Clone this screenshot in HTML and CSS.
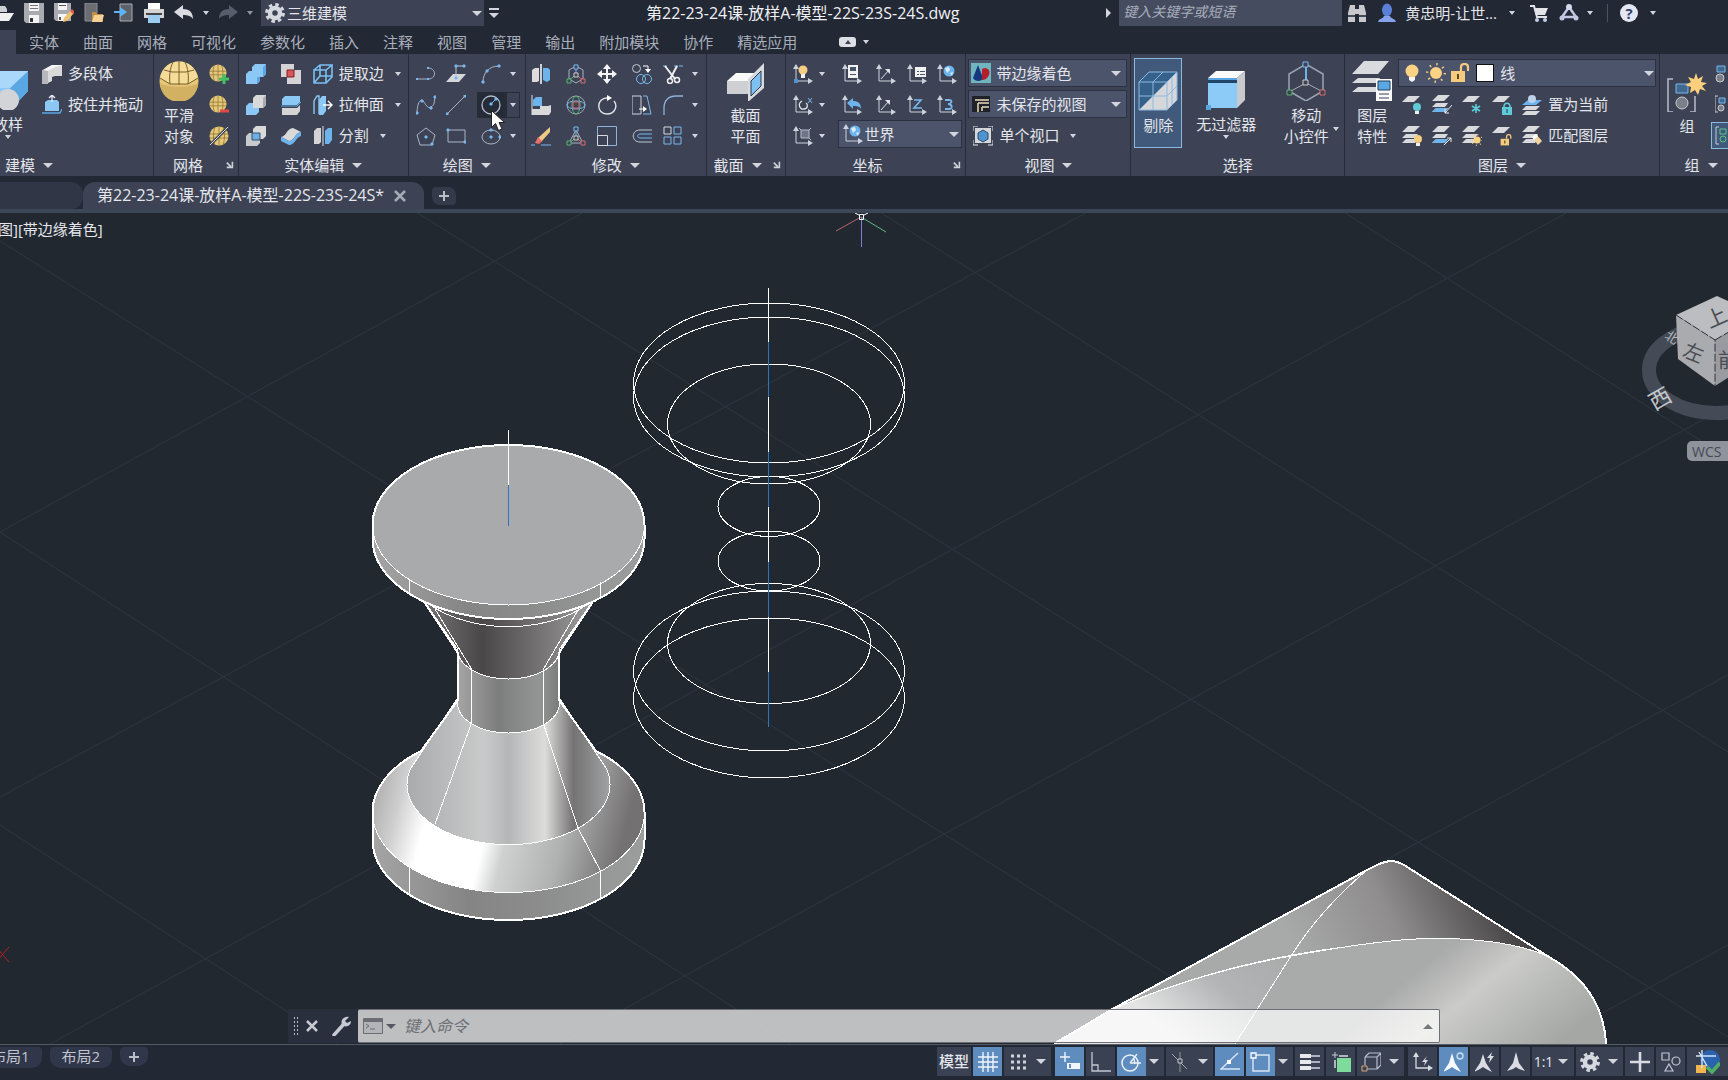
FILE: index.html
```html
<!DOCTYPE html>
<html lang="zh-CN">
  <head>
    <meta charset="utf-8" />
    <title>第22-23-24课-放样A-模型-22S-23S-24S.dwg</title>
    <link rel="stylesheet" href="styles.css">
  </head>

  <body>
    <!-- icon sprite -->
    <svg class="sprite" aria-hidden="true">
      <defs>
        <symbol id="open" viewBox="0 0 20 20"><path d="M0 3h11l2 3v3H6L2 18H0Z" fill="#cfd0d3" /><path d="M6 10h14l-5 8H1Z" fill="#f0f0f0" /></symbol>
        <symbol id="save" viewBox="0 0 20 20"><path d="M0 0h20v20H2l-2-2Z" fill="#a9abb0" /><path d="M5 0h10v8H5z" fill="#f4f4f4" /><path d="M6 2h8v1H6zM6 5h8v1H6z" fill="#777" /><path d="M5 12h10v8H5z" fill="#f4f4f4" /><path d="M6 15h3v4H6z" fill="#333" /></symbol>
        <symbol id="saveas" viewBox="0 0 20 20"><path d="M0 0h17v18H2l-2-2Z" fill="#a9abb0" /><path d="M4 0h9v7H4zM4 11h9v7H4z" fill="#f4f4f4" /><path d="M5 2h7v1H5zM5 14h2v3H5z" fill="#555" /><path d="M9 19l1-4 7-8 3 3-7 8Z" fill="#f0c26e" /><path d="M16 8l2-2 3 3-2 2Z" fill="#e0584f" /></symbol>
        <symbol id="fromweb" viewBox="0 0 20 20"><path d="M1 0h12v18H1z" fill="#6a6d72" stroke="#8b8e94" /><path d="M8 9h4l1 2h6v8H8z" fill="#c08f43" /><path d="M10 12h10l-2 7H8Z" fill="#f6d193" /></symbol>
        <symbol id="toweb" viewBox="0 0 20 20"><path d="M6 1h12v17H6z" fill="#5d6269" stroke="#a9adb3" /><path d="M0 8h6V4l7 5-7 5v-4H0Z" fill="#5cb3f5" /></symbol>
        <symbol id="print" viewBox="0 0 20 20"><path d="M4 0h12v6H4z" fill="#fff" /><path d="M0 6h20v9H0z" fill="#d4d4d4" /><path d="M2 10h16v2H2z" fill="#444" /><path d="M4 12h12v8H4z" fill="#9ccdf0" /></symbol>
        <symbol id="undo" viewBox="0 0 20 20"><path d="M0 9l9-7v4c7 0 10 4 10 10-2-3-5-4-10-4v4Z" fill="#d9dbe0" /></symbol>
        <symbol id="redo" viewBox="0 0 20 20"><path d="M20 9l-9-7v4C4 6 1 10 1 16c2-3 5-4 10-4v4Z" fill="#565d6b" /></symbol>
        <symbol id="gear" viewBox="0 0 20 20"><circle cx="10" cy="10" r="5" fill="none" stroke="#d6d9e0" stroke-width="4.500" /><circle cx="10" cy="10" r="8.400" fill="none" stroke="#d6d9e0" stroke-width="3" stroke-dasharray="3.500 3.100" /></symbol>
        <symbol id="find" viewBox="0 0 20 20"><path d="M3 2h5v4h4V2h5l2 8v9h-7v-8H8v8H1v-9Z" fill="#c9c9cd" /><path d="M1 12h7v2H1zM12 12h7v2h-7z" fill="#444b58" /></symbol>
        <symbol id="user" viewBox="0 0 20 20"><ellipse cx="10" cy="7" rx="5" ry="6.500" fill="#5a7fd6" /><path d="M1 19c1-4 5-3 6-6h6c1 3 5 2 6 6Z" fill="#86a2ec" /></symbol>
        <symbol id="cart" viewBox="0 0 20 20"><path d="M1 3h4l3 11h10" fill="none" stroke="#e2e3e8" stroke-width="2" /><path d="M5 5h14l-3 7H7Z" fill="#e2e3e8" /><circle cx="8" cy="17" r="2" fill="#c5cbea" /><circle cx="16" cy="17" r="2" fill="#c5cbea" /></symbol>
        <symbol id="adsk" viewBox="0 0 20 20"><path d="M10 4 3 14h14Z" fill="none" stroke="#c2c8e4" stroke-width="2.500" /><circle cx="10" cy="4" r="3" fill="#d4d8ec" /><circle cx="3" cy="15" r="2.500" fill="#c2c8e4" /><circle cx="17" cy="15" r="2.500" fill="#c2c8e4" /></symbol>

        <symbol id="loft" viewBox="0 0 40 40"><path d="M0 1h40v20L26 36 8 18H0Z" fill="#8cc8f5" /><path d="M40 1v20L26 36 22 18Z" fill="#5aa7e4" /><path d="M0 1h40L22 18H8Z" fill="#a9d8fa" /><circle cx="20" cy="30" r="11" fill="#d2d4d8" /></symbol>
        <symbol id="polysolid" viewBox="0 0 20 20"><path d="M1 6 10 1h10v11h-7l-3 1v4l-6 3H0Z" fill="#d9d9d9" /><path d="M0 6h6v14H0z" fill="#b5b7bb" /><path d="M1 6 10 1h10l-9 3-5 3Z" fill="#f5f5f5" /></symbol>
        <symbol id="presspull" viewBox="0 0 20 20"><path d="M3 7l3-2h9l2 2v9H3z" fill="#8cc8f5" /><path d="M10 7V0M7 3l3-3 3 3" fill="none" stroke="#eef" stroke-width="1.300" /><path d="M0 18h18l2-4" fill="none" stroke="#5aa7e4" stroke-width="1.400" /></symbol>
        <symbol id="smooth" viewBox="0 0 40 40"><circle cx="20" cy="20" r="19.500" fill="#e6c777" /><path d="M1 17C4 5 12 .5 20 .5S36 5 39 17l-10 6H11Z" fill="#f5dc98" /><path d="M1 17l10 6h18l10-6M11 23c-1-8 0-16 3-22M29 23c1-8 0-16-3-22M20 0v24M5 9l8 2h14l8-2" fill="none" stroke="#77612b" /><path d="M1 22c6 5 32 5 38 0a19 19 0 0 1-38 0" fill="#d3b162" /></symbol>
        <symbol id="ball" viewBox="0 0 20 20"><circle cx="10" cy="10" r="9.500" fill="#e6c777" /><path d="M1 8h18M1 12h18M6 1c-2 6-2 12 0 18M14 1c2 6 2 12 0 18M10 1v18" fill="none" stroke="#8a7338" stroke-width=".8" /></symbol>
        <symbol id="ballplus" viewBox="0 0 20 20"><use href="#ball" width="18" height="18" /><path d="M15 10v10M10 15h10" stroke="#45c062" stroke-width="3" /></symbol>
        <symbol id="ballminus" viewBox="0 0 20 20"><use href="#ball" width="18" height="18" /><path d="M11 16h9" stroke="#e0484a" stroke-width="3" /></symbol>
        <symbol id="ballcut" viewBox="0 0 20 20"><use href="#ball" width="20" height="20" /><path d="M19 1 1 19" stroke="#3d4354" stroke-width="3" /><path d="M19 1 1 19" stroke="#ddd" /></symbol>

        <symbol id="union" viewBox="0 0 20 20"><path d="M6 3l3-3h11v10l-3 3h-3v4l-3 3H0V10l3-3h3Z" fill="#8cc8f5" /><path d="M20 0v10l-3 3V3ZM14 13v4l-3 3v-7Z" fill="#5aa7e4" /></symbol>
        <symbol id="interfere" viewBox="0 0 20 20"><path d="M0 0h13v13H0zM6 6h14v14H6z" fill="#d4d4d6" /><path d="M6 6h7v7H6z" fill="#d9595b" stroke="#7c2022" /></symbol>
        <symbol id="subtract" viewBox="0 0 20 20"><path d="M0 11l3-3h4v5h6v4l-3 3H0Z" fill="#8cc8f5" /><path d="M7 3l3-3h10v10l-3 3H7Z" fill="#d9d9d9" /><path d="M20 0v10l-3 3V3Z" fill="#a9abb0" /></symbol>
        <symbol id="slice" viewBox="0 0 20 20"><path d="M1 4l3-3h15v6l-3 3H1Z" fill="#8cc8f5" /><path d="M1 13h15l3-3v6l-3 4H1Z" fill="#d4d4d4" /><path d="M0 11h16l4-4" fill="none" stroke="#5aa7e4" /></symbol>
        <symbol id="intersect" viewBox="0 0 20 20"><path d="M0 10l3-3h11v10l-3 3H0Z" fill="#c9cace" /><path d="M7 3l3-3h10v10l-3 3H7Z" fill="#d9d9d9" /><path d="M6 7h8v7H6z" fill="#6eaee0" stroke="#2f5173" /></symbol>
        <symbol id="thicken" viewBox="0 0 20 20"><path d="M0 11c5 0 6-9 12-9l8 4c-6 1-7 9-12 9Z" fill="#d9d9d9" /><path d="M0 11l8 4c5 0 6-8 12-9v4c-5 1-6 9-12 9l-8-4Z" fill="#6db4ec" /></symbol>
        <symbol id="edges" viewBox="0 0 20 20"><path d="M1 6h12v13H1zM1 6l6-5h12l-6 5M19 1v12l-6 6M7 1v11h12M7 12l-6 7" fill="none" stroke="#79c0f2" stroke-width="1.600" /></symbol>
        <symbol id="extrude" viewBox="0 0 20 20"><path d="M1 19V6l3-5h2v18" fill="none" stroke="#8cc8f5" stroke-width="1.400" /><path d="M6 5l3-4h4v15l-3 4H6Z" fill="#8cc8f5" /><path d="M10 10h8M15 6l4 4-4 4" fill="none" stroke="#fff" stroke-width="1.400" /></symbol>
        <symbol id="separate" viewBox="0 0 20 20"><path d="M1 5l3-3h4v14l-2 2H1Z" fill="#d4d4d4" /><path d="M12 5l3-3h4v12l-3 4h-4Z" fill="#6db4ec" /><path d="M10 0v20" stroke="#dfe6ee" /></symbol>

        <symbol id="pline" viewBox="0 0 20 20"><path d="M1 15h12c8-1 7-11-1-11" fill="none" stroke="#aab6c6" /><path d="M0 14h2v2H0zM11 14h2v2h-2zM11 3h2v2h-2z" fill="#79b8ee" /></symbol>
        <symbol id="plane" viewBox="0 0 20 20"><path d="M7 10h13l-7 8H0Z" fill="#d4d6da" /><path d="M10 14V2h9" fill="none" stroke="#b9c7d6" /><path d="M9 1h2v2H9zM17 1h2v2h-2zM9 13h2v2H9z" fill="#79b8ee" stroke="#79b8ee" /></symbol>
        <symbol id="arc" viewBox="0 0 20 20"><path d="M2 18C2 9 8 2 18 2" fill="none" stroke="#aab6c6" /><path d="M1 17h2v2H1zM5 6h2v2H5zM17 1h2v2h-2z" fill="#79b8ee" stroke="#79b8ee" /></symbol>
        <symbol id="spline" viewBox="0 0 20 20"><path d="M1 19C1 9 4 3 7 6s4 8 8 6 3-5 4-11" fill="none" stroke="#aab6c6" /><path d="M0 17h2v2H0zM5 5h2v2H5zM14 12h2v2h-2zM18 1h2v2h-2z" fill="#79b8ee" stroke="#79b8ee" /></symbol>
        <symbol id="line" viewBox="0 0 20 20"><path d="M1 19 19 1" stroke="#aab6c6" /><path d="M0 18h2v2H0zM18 0h2v2h-2z" fill="#79b8ee" stroke="#79b8ee" /></symbol>
        <symbol id="circle" viewBox="0 0 20 20"><circle cx="10" cy="10" r="9" fill="none" stroke="#b4bfcc" stroke-width="1.300" /><path d="M10 9l5-5" stroke="#79b8ee" /><path d="M9 8h2v2H9zM14 3h2v2h-2z" fill="#79b8ee" stroke="#79b8ee" /></symbol>
        <symbol id="polygon" viewBox="0 0 20 20"><path d="M10 2l9 7-3 10H4L1 9Z" fill="none" stroke="#aab6c6" /><path d="M9 10h2v2H9zM15 17h2v2h-2z" fill="#79b8ee" stroke="#79b8ee" /></symbol>
        <symbol id="rect" viewBox="0 0 20 20"><path d="M2 4h17v12H2z" fill="none" stroke="#aab6c6" /><path d="M1 3h2v2H1zM18 15h2v2h-2z" fill="#79b8ee" stroke="#79b8ee" /></symbol>
        <symbol id="ellipse" viewBox="0 0 20 20"><ellipse cx="10" cy="11" rx="9" ry="7" fill="none" stroke="#aab6c6" /><path d="M9 10h2v2H9zM9 3h2v2H9zM18 10h2v2h-2z" fill="#79b8ee" stroke="#79b8ee" /></symbol>

        <symbol id="mirror3d" viewBox="0 0 20 20"><path d="M1 6l3-2h4v13l-2 1H1Z" fill="#dcdcde" /><path d="M12 4h5l2 2v10l-3 2-4-2Z" fill="#6db4ec" /><path d="M10 0v20" stroke="#fff" stroke-width="1.500" /></symbol>
        <symbol id="move3d" viewBox="0 0 20 20"><path d="M3 15V6l7-4 7 4v9l-7 4Z" fill="none" stroke="#a4b4c4" /><path d="M10 9V3" stroke="#79b8ee" /><path d="M10 11 3 16" stroke="#58b56f" /><path d="M10 11l7 5" stroke="#d66a70" /><path d="M8 1h4v4H8z" fill="#3d4354" stroke="#79b8ee" /><path d="M1 15h4v4H1z" fill="#3d4354" stroke="#58b56f" /><path d="M15 15h4v4h-4z" fill="#3d4354" stroke="#d66a70" /><path d="M8 9h4v4H8z" fill="#3d4354" stroke="#ccc" /></symbol>
        <symbol id="move" viewBox="0 0 20 20"><path d="M10 0l4 5h-3v4h4V6l5 4-5 4v-3h-4v4h3l-4 5-4-5h3v-4H5v3l-5-4 5-4v3h4V5H6Z" fill="#f4f4f4" /></symbol>
        <symbol id="copy" viewBox="0 0 20 20"><circle cx="4.500" cy="4.500" r="4" fill="none" stroke="#c3c9d2" /><circle cx="9" cy="15" r="4.500" fill="none" stroke="#79b8ee" /><circle cx="15" cy="15" r="4.500" fill="none" stroke="#79b8ee" /><path d="M11 2h5v4" fill="none" stroke="#fff" /><path d="M13 5h6l-3 4Z" fill="#fff" /></symbol>
        <symbol id="trim" viewBox="0 0 20 20"><path d="M0 2h5M11 2h9" stroke="#79b8ee" stroke-dasharray="4 1" /><path d="M2 2l10 13M14 2 7 15" stroke="#f0f0f0" stroke-width="2" /><circle cx="7" cy="17" r="2.500" fill="none" stroke="#f0f0f0" stroke-width="1.500" /><circle cx="14" cy="16" r="2.500" fill="none" stroke="#f0f0f0" stroke-width="1.500" /></symbol>
        <symbol id="align3d" viewBox="0 0 20 20"><path d="M2 5l3-3h6v9H2z" fill="#6db4ec" /><path d="M1 0v20" stroke="#dfe6ee" /><path d="M1 14h8v-3h8l3-1v7l-2 3H1z" fill="#d9d9db" /></symbol>
        <symbol id="rotate3d" viewBox="0 0 20 20"><circle cx="10" cy="10" r="9" fill="none" stroke="#9aa8b8" /><ellipse cx="10" cy="10" rx="4" ry="9" fill="none" stroke="#58b56f" /><ellipse cx="10" cy="10" rx="9" ry="4" fill="none" stroke="#79b8ee" /><path d="M7 7h6v6H7z" fill="none" stroke="#d66a70" /></symbol>
        <symbol id="rotate" viewBox="0 0 20 20"><path d="M10 3C-1 3-1 19 10 19c8 0 11-8 7-13" fill="none" stroke="#dfe2e8" stroke-width="1.400" /><path d="M10 0l5 3-5 3Z" fill="#fff" /></symbol>
        <symbol id="stretch" viewBox="0 0 20 20"><path d="M0 1h9v18H0z" fill="none" stroke="#cfd3da" /><path d="M11 1h4l4 18h-8" fill="none" stroke="#79b8ee" /><path d="M7 14h5" stroke="#fff" /><path d="M11 11l4 3-4 3Z" fill="#fff" /></symbol>
        <symbol id="fillet" viewBox="0 0 20 20"><path d="M1 20V13C1 5 6 1 13 1h7" fill="none" stroke="#8cb3d8" stroke-width="1.300" /></symbol>
        <symbol id="erase" viewBox="0 0 20 20"><path d="M7 12 19 1v5l-9 10Z" fill="#f0c988" /><path d="M7 11l4 4-3 3-4-1Z" fill="#e66f6c" /><path d="M0 19h4M10 19h10" stroke="#79b8ee" /></symbol>
        <symbol id="scale3d" viewBox="0 0 20 20"><path d="M10 4 3 17h14Z" fill="none" stroke="#a4b4c4" /><path d="M10 3v8" stroke="#79b8ee" /><path d="M10 12l-7 5" stroke="#58b56f" /><path d="M10 12l7 5" stroke="#d66a70" /><path d="M8 1h4v4H8z" fill="#3d4354" stroke="#79b8ee" /><path d="M1 15h4v4H1z" fill="#3d4354" stroke="#58b56f" /><path d="M15 15h4v4h-4z" fill="#3d4354" stroke="#d66a70" /><path d="M8 10h4v4H8z" fill="#3d4354" stroke="#ccc" /></symbol>
        <symbol id="scale" viewBox="0 0 20 20"><path d="M.5 19.500V.5h19v19Z" fill="none" stroke="#8cb3d8" /><path d="M.5 9.500h10v10H.5z" fill="none" stroke="#d6dae0" /></symbol>
        <symbol id="offset" viewBox="0 0 20 20"><path d="M20 4H8c-9 0-9 12 0 12h12" fill="none" stroke="#b9c7d6" /><path d="M20 8H8c-3 0-3 4 0 4h12" fill="none" stroke="#79b8ee" /></symbol>
        <symbol id="array" viewBox="0 0 20 20"><path d="M1 1h7v7H1z" fill="none" stroke="#d6dae0" /><path d="M11 1h7v7h-7zM1 11h7v7H1zM11 11h7v7h-7z" fill="none" stroke="#79b8ee" /></symbol>

        <symbol id="section" viewBox="0 0 40 40"><path d="M1 20l9-8h19L22 20Z" fill="#fafafa" /><path d="M1 20h22v13H1z" fill="#cfd0d3" /><path d="M22 18 38 2v25L22 41Z" fill="#d9dade" /><path d="M25 20 35 10v15L25 35Z" fill="#7fc0f3" stroke="#2d3a4c" /></symbol>

        <symbol id="axes" viewBox="0 0 20 20"><path d="M3 3v14h13" fill="none" stroke="#cdd3dc" /><path d="M0 5l3-5 3 5ZM15 14l5 3-5 3Z" fill="#cdd3dc" /></symbol>
        <symbol id="axbulb" viewBox="0 0 20 20"><use href="#axes" /><circle cx="10" cy="6" r="4.500" fill="#f4cf83" /><path d="M8 10h4v4H8z" fill="#f2f2f2" /><path d="M1 15h4v4H1z" fill="#4f93cf" /></symbol>
        <symbol id="axmanage" viewBox="0 0 20 20"><use href="#axes" /><path d="M6 1h10v13H6z" fill="#f2f2f2" /><path d="M8 3h6v4H8zM8 10h6v1H8z" fill="#44546b" /></symbol>
        <symbol id="axobj" viewBox="0 0 20 20"><use href="#axes" /><path d="M5 15 13 6" stroke="#dfe2e8" /><path d="M14 5v5l-5-5Z" fill="#dfe2e8" /></symbol>
        <symbol id="axlist" viewBox="0 0 20 20"><use href="#axes" /><path d="M8 3h11v10H8z" fill="#f2f2f2" /><path d="M10 7h2v1h-2zM13 7h5v1h-5zM10 10h2v1h-2zM13 10h5v1h-5z" fill="#44546b" /></symbol>
        <symbol id="axworld" viewBox="0 0 20 20"><use href="#axes" /><circle cx="12" cy="7" r="5.500" fill="#6db4ec" /><path d="M8 4l4-1 1 3-3 3ZM13 9l3-1-1 4Z" fill="#d6ecfb" /></symbol>
        <symbol id="axrot" viewBox="0 0 20 20"><use href="#axes" /><path d="M9 6c-5 3-2 9 2 8 4 0 4-5 2-6" fill="none" stroke="#dfe2e8" stroke-width="1.300" /><path d="M15 3l4 5M19 3l-4 5" stroke="#79b8ee" /></symbol>
        <symbol id="axprev" viewBox="0 0 20 20"><use href="#axes" /><path d="M5 8l6-5v3c5 0 8 2 8 8-2-3-4-3-8-3v3Z" fill="#6db4ec" /></symbol>
        <symbol id="axz" viewBox="0 0 20 20"><use href="#axes" /><path d="M7 5h7L7 13h8" fill="none" stroke="#79b8ee" stroke-width="1.600" /></symbol>
        <symbol id="ax3" viewBox="0 0 20 20"><use href="#axes" /><path d="M8 5h5c3 1 1 4-2 4 4 0 5 4 2 5H8" fill="none" stroke="#79b8ee" stroke-width="1.800" /></symbol>
        <symbol id="axface" viewBox="0 0 20 20"><use href="#axes" /><path d="M8 4h8v8H8z" fill="#6d7686" stroke="#b7bdc8" /><path d="M6 2l2 2M18 2l-2 2M18 14l-2-2" stroke="#b7bdc8" /></symbol>

        <symbol id="shade" viewBox="0 0 20 20"><path d="M0 0h20v20H0z" fill="#6fb6bf" /><path d="M7 2 2 15c2 4 9 4 10 0Z" fill="#17377f" /><path d="M11 6c5-3 9 2 7 6-1 3-4 5-7 5Z" fill="#b3202c" /></symbol>
        <symbol id="viewico" viewBox="0 0 20 20"><path d="M1 2h18v16H1z" fill="#1f2228" /><path d="M4 6h14M7 9h11M7 9v9M11 13h7M11 13v4" stroke="#e8dcb8" stroke-width="1.500" /></symbol>
        <symbol id="vport" viewBox="0 0 20 20"><path d="M2 2h16v15H2z" fill="#d6d7da" /><path d="M0 5V0h5M15 0h5v5M20 14v5h-5M5 19H0v-5" fill="none" stroke="#e8e8e8" /><path d="M10 4l5 3v6l-5 3-5-3V7Z" fill="#4f93cf" stroke="#264b70" /></symbol>

        <symbol id="cull" viewBox="0 0 40 40"><path d="M1 39V11L11 1h28v28L29 39Z" fill="#35618a" /><path d="M1 39 39 1v28L29 39Z" fill="#d6d7da" /><path d="M1 39V11L11 1h28v28L29 39ZM1 11h28l10-10M29 11v28M1 25h28l10-10M15 11v28M15 11 25 1M34 6v28" fill="none" stroke="#8cb9e0" /></symbol>
        <symbol id="nofilter" viewBox="0 0 40 40"><path d="M2 8 10 1h29l-8 7Z" fill="#fafafa" /><path d="M31 8l8-7v29l-8 8Z" fill="#c9cacd" /><path d="M2 8h29v30H2z" fill="#8ccaf8" /><path d="M2 8h29v5H2z" fill="#20476a" /><path d="M2 8h29v2H2zM0 35h5v5H0z" fill="#58a5df" /></symbol>
        <symbol id="gizmo" viewBox="0 0 40 40"><path d="M3 30V13L20 3l17 10v17L20 40Z" fill="none" stroke="#9aa5b3" stroke-width="1.500" /><path d="M20 20V5" stroke="#6db4ec" stroke-width="2" /><path d="M20 22 3 31M20 22l17 9" stroke="#a9abb0" /><path d="M17 1h5v5h-5z" fill="#3d4354" stroke="#79b8ee" /><path d="M1 29h5v5H1z" fill="#3d4354" stroke="#58b56f" /><path d="M34 29h5v5h-5z" fill="#3d4354" stroke="#d66a70" /><path d="M17 19h5v5h-5z" fill="#3d4354" stroke="#ccc" /></symbol>

        <symbol id="layerprop" viewBox="0 0 40 40"><path d="M12 0h25L26 13H0ZM6 17h22l-3 5H0ZM6 26h19v5H0Z" fill="#d9dadd" /><path d="M24 18h16v22H24z" fill="#fafafa" /><path d="M26 20h12v9H26z" fill="#5aa7e4" stroke="#23405e" /><path d="M27 33h10M27 37h10" stroke="#3a4150" /></symbol>
        <symbol id="bulb" viewBox="0 0 20 20"><circle cx="10" cy="8" r="6.500" fill="#f9d283" /><path d="M7 14h6v3l-3 2-3-2Z" fill="#f5f5f5" /></symbol>
        <symbol id="sun" viewBox="0 0 20 20"><circle cx="10" cy="10" r="6" fill="#f9d283" /><circle cx="10" cy="10" r="8.800" fill="none" stroke="#f9d283" stroke-width="2.400" stroke-dasharray="1.400 5.510" /></symbol>
        <symbol id="unlock" viewBox="0 0 20 20"><path d="M1 8h14v11H1z" fill="#f6cb7d" /><path d="M11 8V4c0-4 7-4 7 0v4" fill="none" stroke="#f6cb7d" stroke-width="2.200" /><path d="M8 11v5" stroke="#5c4a22" stroke-width="2" /></symbol>
        <symbol id="sheet" viewBox="0 0 20 20"><path d="M6 1h12l-6 6H0Z" fill="#d9dadd" /></symbol>
        <symbol id="stack" viewBox="0 0 20 20"><path d="M6 0h12l-6 6H0ZM4 8h12l-3 4H0ZM4 13h12l-3 4H0Z" fill="#d9dadd" /></symbol>
        <symbol id="layoff" viewBox="0 0 20 20"><use href="#sheet" /><circle cx="15" cy="12" r="4" fill="#5ecbd6" /><path d="M13 16h4v3h-4z" fill="#eee" /></symbol>
        <symbol id="layiso" viewBox="0 0 20 20"><use href="#stack" /><path d="M4 13h12l-3 4H0Z" fill="#6db4ec" /><path d="M20 10l-7 8M13 14v4h4" fill="none" stroke="#eee" /></symbol>
        <symbol id="layfrz" viewBox="0 0 20 20"><use href="#sheet" /><path d="M14 9v9M10 11l8 5M18 11l-8 5" stroke="#5ecbd6" stroke-width="1.600" /></symbol>
        <symbol id="laylck" viewBox="0 0 20 20"><use href="#sheet" /><path d="M10 12h10v8H10z" fill="#5ecbd6" /><path d="M12 12c0-5 6-5 6 0" fill="none" stroke="#5ecbd6" stroke-width="1.600" /><path d="M15 14v4" stroke="#235" /></symbol>
        <symbol id="laycur" viewBox="0 0 20 20"><path d="M6 5h14l-6 5H0Z" fill="#6db4ec" /><path d="M4 11h14l-4 4H0ZM4 16h14l-4 4H0Z" fill="#d9dadd" /><circle cx="10" cy="4" r="4" fill="#bcd3ea" /></symbol>
        <symbol id="layon" viewBox="0 0 20 20"><use href="#stack" /><circle cx="16" cy="13" r="4" fill="#f6cb7d" /><path d="M14 17h4v3h-4z" fill="#eee" /></symbol>
        <symbol id="layuniso" viewBox="0 0 20 20"><use href="#stack" /><path d="M4 13h12l-3 4H0Z" fill="#6db4ec" /><path d="M12 19l7-7M15 12h4v4" fill="none" stroke="#eee" /></symbol>
        <symbol id="laythw" viewBox="0 0 20 20"><use href="#stack" /><use href="#sun" x="9" y="8" width="12" height="12" /></symbol>
        <symbol id="layulk" viewBox="0 0 20 20"><use href="#sheet" /><use href="#unlock" x="8" y="8" width="12" height="12" /></symbol>
        <symbol id="laymch" viewBox="0 0 20 20"><use href="#stack" /><path d="M10 11l4-3 6 7-4 4Z" fill="#f0d4a4" /><path d="M10 11l4-3 2 2-4 4Z" fill="#fff" /></symbol>
        <symbol id="group" viewBox="0 0 40 40"><path d="M6 7H1v33h5M23 40h5V24" fill="none" stroke="#b7bdc8" stroke-width="1.500" /><path d="M9 12h12v9H9z" fill="#41698f" stroke="#79b8ee" /><circle cx="15" cy="31" r="6" fill="#7a7f89" stroke="#c9cbd0" /><path d="M29 1l2 6 5-3-2 6 6 1-5 3 4 5-6-2-2 6-3-5-5 3 1-6-6-2 6-3-3-5 6 2Z" fill="#fbcf7c" /></symbol>
        <symbol id="grp1" viewBox="0 0 20 20"><path d="M2 2h8v6H2z" fill="#41698f" stroke="#79b8ee" /><circle cx="5" cy="14" r="4" fill="#7a7f89" stroke="#c9cbd0" /></symbol>
        <symbol id="grp2" viewBox="0 0 20 20"><path d="M3 1H0v16h3" fill="none" stroke="#c9cbd0" /><path d="M4 3h6v5H4z" fill="#41698f" stroke="#79b8ee" /><circle cx="6" cy="13" r="3" fill="#7a7f89" stroke="#c9cbd0" /></symbol>
        <symbol id="grp3" viewBox="0 0 20 20"><path d="M4 1H1v17h3" fill="none" stroke="#c9cbd0" /><path d="M5 3h6v5H5z" fill="none" stroke="#58c883" /><circle cx="8" cy="13" r="3" fill="none" stroke="#58c883" /></symbol>

        <symbol id="launch" viewBox="0 0 20 20"><path d="M6 7l5 5M13 6v7H6" fill="none" stroke="#cdd1da" stroke-width="2" /></symbol>
        <symbol id="wrench" viewBox="0 0 20 20"><path d="M2 19 11 9" stroke="#c7cad2" stroke-width="3.500" stroke-linecap="round" /><path d="M17 1c-5-1-9 3-7 8 4 3 9 1 9-4l-4 2-2-2Z" fill="#c7cad2" /></symbol>

        <symbol id="s-grid" viewBox="0 0 20 20"><path d="M5 0v20M10 0v20M15 0v20M0 5h20M0 10h20M0 15h20" stroke="#f2f6fb" stroke-width="1.400" /></symbol>
        <symbol id="s-snap" viewBox="0 0 20 20"><path d="M3 4h15M3 10h15M3 16h15" stroke="#cfd3db" stroke-width="3" stroke-dasharray="3 3" /></symbol>
        <symbol id="s-dyn" viewBox="0 0 20 20"><path d="M5 0v10M0 5h10" stroke="#f2f6fb" stroke-width="1.400" /><path d="M7 11h13v6H7z" fill="#f2f6fb" /><path d="M9 12h2v4H9z" fill="#5f8cbf" /></symbol>
        <symbol id="s-ortho" viewBox="0 0 20 20"><path d="M1 0v19h19M1 13h6v6" fill="none" stroke="#c2c7d1" stroke-width="1.300" /></symbol>
        <symbol id="s-polar" viewBox="0 0 20 20"><circle cx="9" cy="11" r="8" fill="none" stroke="#eaf1f9" stroke-width="1.500" /><path d="M9 11 16 2M9 11h11M13 7l1 5" stroke="#eaf1f9" stroke-width="1.300" /></symbol>
        <symbol id="s-iso" viewBox="0 0 20 20"><path d="M10 0v20" stroke="#8d9687" /><path d="M2 2l15 15" stroke="#9aa0ab" /><path d="M8 7h4v4H8z" fill="#3b4253" stroke="#c2c7d1" /></symbol>
        <symbol id="s-track" viewBox="0 0 20 20"><path d="M18 1 1 17h19" fill="none" stroke="#d9e6f4" stroke-width="1.400" /><path d="M7 8h4v4H7z" fill="#fff" /></symbol>
        <symbol id="s-osnap" viewBox="0 0 20 20"><path d="M3 3h16v16H3z" fill="none" stroke="#d9e6f4" stroke-width="1.400" /><path d="M1 1h5v5H1z" fill="#5f8cbf" stroke="#fff" stroke-width="1.300" /></symbol>
        <symbol id="s-lw" viewBox="0 0 20 20"><path d="M0 4h11M0 10h11M0 16h11" stroke="#e6e8ee" stroke-width="4" /><path d="M11 4h9M11 10h9M11 16h9" stroke="#aeb3bf" stroke-width="2" /></symbol>
        <symbol id="s-trans" viewBox="0 0 20 20"><path d="M4 0v6M1 3h6" stroke="#c2c7d1" /><path d="M4 8v8M8 4h9" stroke="#d7dbe2" stroke-width="1.500" /><path d="M6 6h14v14H6z" fill="#7edb9b" /></symbol>
        <symbol id="s-3d" viewBox="0 0 20 20"><path d="M4 5h12v12H6M4 5l4-4h12v12l-4 4M16 5l4-4M4 5v8" fill="none" stroke="#b9bfca" stroke-width="1.200" /><path d="M1 14h5v5H1z" fill="#3b4253" stroke="#d9a77a" /></symbol>
        <symbol id="s-ucs" viewBox="0 0 20 20"><path d="M3 3v13h14" fill="none" stroke="#d6dae2" stroke-width="1.300" /><path d="M0 5l3-5 3 5ZM15 13l5 3-5 3ZM14 4l-5 6h3l-1 4 4-6h-3Z" fill="#d6dae2" /></symbol>
        <symbol id="s-anno" viewBox="0 0 20 20"><path d="M10 0l3 11 6 8-6-2-3-2-3 2-6 2 6-8Z" fill="#d9dce3" /></symbol>
        <symbol id="s-anno1" viewBox="0 0 20 20"><path d="M8 1l3 10 6 9-6-3-3-2-3 2-6 3 6-9Z" fill="#f6f9fc" /><circle cx="16" cy="4" r="3" fill="none" stroke="#cfe1f3" stroke-width="1.300" /></symbol>
        <symbol id="s-anno2" viewBox="0 0 20 20"><path d="M8 2l3 9 6 9-6-3-3-2-3 2-6 3 6-9Z" fill="#d9dce3" /><path d="M17 0l-5 6h3l-1 5 5-7h-3Z" fill="#d9dce3" /></symbol>
        <symbol id="s-plus" viewBox="0 0 20 20"><path d="M10 0v20M0 10h20" stroke="#d9dce3" stroke-width="2.600" /></symbol>
        <symbol id="s-iso2" viewBox="0 0 20 20"><path d="M1 1h7v7H1zM8 12l4 7H4Z" fill="none" stroke="#c2c7d1" stroke-width="1.200" /><circle cx="15" cy="9" r="4" fill="none" stroke="#c2c7d1" stroke-width="1.200" /></symbol>
        <symbol id="s-perf" viewBox="0 0 24 24"><circle cx="14" cy="10" r="10" fill="#2a62ad" /><path d="M0 15h10v8H0z" fill="#f2b54d" /><path d="M6 0v18M0 6h20M11 16l-8-14" stroke="#d3e4f6" stroke-width="1.400" /><path d="M11 17l5 5 8-9" fill="none" stroke="#4fae63" stroke-width="3.500" /></symbol>
      </defs>
    </svg>

    <header class="titlebar">
      <div class="quick">
        <button aria-label="打开"><svg><use href="#open" /></svg></button>
        <button aria-label="保存"><svg><use href="#save" /></svg></button>
        <button aria-label="另存为"><svg><use href="#saveas" /></svg></button>
        <button aria-label="从 Web 打开"><svg><use href="#fromweb" /></svg></button>
        <button aria-label="保存到 Web"><svg><use href="#toweb" /></svg></button>
        <button aria-label="打印"><svg><use href="#print" /></svg></button>
        <button aria-label="放弃"><svg><use href="#undo" /></svg></button>
        <button class="slim" aria-label="放弃列表"><i class="caret"></i></button>
        <button aria-label="重做"><svg><use href="#redo" /></svg></button>
        <button class="slim" aria-label="重做列表"><i class="caret dim"></i></button>
      </div>
      <div class="combo workspace">
        <svg><use href="#gear" /></svg>
        <select aria-label="工作空间"><option>三维建模</option></select>
        <i class="caret big"></i>
      </div>
      <button class="customize" aria-label="自定义快速访问工具栏"><i class="caret big"></i></button>
      <h1>第22-23-24课-放样A-模型-22S-23S-24S.dwg</h1>
      <button class="slim" aria-label="收拢"><i class="caret right"></i></button>
      <input class="search" type="text" placeholder="键入关键字或短语" aria-label="搜索" />
      <div class="account">
        <button aria-label="查找"><svg><use href="#find" /></svg></button>
        <button class="name"><svg><use href="#user" /></svg>黄忠明-让世...<i class="caret"></i></button>
        <button aria-label="商店"><svg><use href="#cart" /></svg></button>
        <button class="app" aria-label="应用"><svg><use href="#adsk" /></svg><i class="caret"></i></button>
        <button class="help" aria-label="帮助"><b>?</b><i class="caret"></i></button>
      </div>
    </header>

    <nav class="tabs">
      <a class="current" href="#" aria-label="常用"></a>
      <a href="#">实体</a>
      <a href="#">曲面</a>
      <a href="#">网格</a>
      <a href="#">可视化</a>
      <a href="#">参数化</a>
      <a href="#">插入</a>
      <a href="#">注释</a>
      <a href="#">视图</a>
      <a href="#">管理</a>
      <a href="#">输出</a>
      <a href="#">附加模块</a>
      <a href="#">协作</a>
      <a href="#">精选应用</a>
      <button class="collapse" aria-label="最小化功能区"><span><i class="caret up"></i></span><i class="caret"></i></button>
    </nav>

    <div class="ribbon">
      <section class="panel modeling">
        <div class="body">
          <button class="large"><svg><use href="#loft" /></svg>放样<i class="caret"></i></button>
          <div class="list">
            <button><svg><use href="#polysolid" /></svg>多段体</button>
            <button><svg><use href="#presspull" /></svg>按住并拖动</button>
          </div>
        </div>
        <h2><span>建模<i class="caret big"></i></span></h2>
      </section>

      <section class="panel mesh">
        <div class="body">
          <button class="large"><svg><use href="#smooth" /></svg>平滑<br />对象</button>
          <div class="list">
            <button aria-label="提高平滑度"><svg><use href="#ballplus" /></svg></button>
            <button aria-label="降低平滑度"><svg><use href="#ballminus" /></svg></button>
            <button aria-label="优化网格"><svg><use href="#ballcut" /></svg></button>
          </div>
        </div>
        <h2><span>网格</span><button aria-label="网格设置"><svg><use href="#launch" /></svg></button></h2>
      </section>

      <section class="panel solidedit">
        <div class="body cells">
          <button aria-label="并集"><svg><use href="#union" /></svg></button>
          <button aria-label="干涉"><svg><use href="#interfere" /></svg></button>
          <button><svg><use href="#edges" /></svg>提取边<i class="caret"></i></button>
          <button aria-label="差集"><svg><use href="#subtract" /></svg></button>
          <button aria-label="剖切"><svg><use href="#slice" /></svg></button>
          <button><svg><use href="#extrude" /></svg>拉伸面<i class="caret"></i></button>
          <button aria-label="交集"><svg><use href="#intersect" /></svg></button>
          <button aria-label="加厚"><svg><use href="#thicken" /></svg></button>
          <button><svg><use href="#separate" /></svg>分割<i class="caret"></i></button>
        </div>
        <h2><span>实体编辑<i class="caret big"></i></span></h2>
      </section>

      <section class="panel draw">
        <div class="body cells">
          <button aria-label="多段线"><svg><use href="#pline" /></svg></button>
          <button aria-label="平面曲面"><svg><use href="#plane" /></svg></button>
          <div class="split"><button aria-label="圆弧"><svg><use href="#arc" /></svg></button><button aria-label="圆弧选项"><i class="caret"></i></button></div>
          <button aria-label="样条曲线"><svg><use href="#spline" /></svg></button>
          <button aria-label="直线"><svg><use href="#line" /></svg></button>
          <div class="split hover">
            <button aria-label="圆"><svg><use href="#circle" /></svg></button><button aria-label="圆选项"><i class="caret"></i></button>
            <svg class="pointer" viewBox="0 0 14 21"><path d="M.5.500v17l4-4 3 7 3.500-1.500-3-6.500h5.500Z" fill="#fff" stroke="#222" /></svg>
          </div>
          <button aria-label="多边形"><svg><use href="#polygon" /></svg></button>
          <button aria-label="矩形"><svg><use href="#rect" /></svg></button>
          <div class="split"><button aria-label="椭圆"><svg><use href="#ellipse" /></svg></button><button aria-label="椭圆选项"><i class="caret"></i></button></div>
        </div>
        <h2><span>绘图<i class="caret big"></i></span></h2>
      </section>

      <section class="panel modify">
        <div class="body cells">
          <button aria-label="三维镜像"><svg><use href="#mirror3d" /></svg></button>
          <button aria-label="三维移动"><svg><use href="#move3d" /></svg></button>
          <button aria-label="移动"><svg><use href="#move" /></svg></button>
          <button aria-label="复制"><svg><use href="#copy" /></svg></button>
          <button aria-label="修剪"><svg><use href="#trim" /></svg></button>
          <button aria-label="修剪选项"><i class="caret"></i></button>
          <button aria-label="三维对齐"><svg><use href="#align3d" /></svg></button>
          <button aria-label="三维旋转"><svg><use href="#rotate3d" /></svg></button>
          <button aria-label="旋转"><svg><use href="#rotate" /></svg></button>
          <button aria-label="拉伸"><svg><use href="#stretch" /></svg></button>
          <button aria-label="圆角"><svg><use href="#fillet" /></svg></button>
          <button aria-label="圆角选项"><i class="caret"></i></button>
          <button aria-label="删除"><svg><use href="#erase" /></svg></button>
          <button aria-label="三维缩放"><svg><use href="#scale3d" /></svg></button>
          <button aria-label="缩放"><svg><use href="#scale" /></svg></button>
          <button aria-label="偏移"><svg><use href="#offset" /></svg></button>
          <button aria-label="阵列"><svg><use href="#array" /></svg></button>
          <button aria-label="阵列选项"><i class="caret"></i></button>
        </div>
        <h2><span>修改<i class="caret big"></i></span></h2>
      </section>

      <section class="panel section">
        <div class="body">
          <button class="large"><svg><use href="#section" /></svg>截面<br />平面</button>
        </div>
        <h2><span>截面<i class="caret big"></i></span><button aria-label="截面设置"><svg><use href="#launch" /></svg></button></h2>
      </section>

      <section class="panel coords">
        <div class="body cells">
          <button aria-label="UCS 图标"><svg><use href="#axbulb" /></svg></button>
          <button aria-label="UCS 图标选项"><i class="caret"></i></button>
          <button aria-label="管理 UCS"><svg><use href="#axmanage" /></svg></button>
          <button aria-label="原点"><svg><use href="#axobj" /></svg></button>
          <button aria-label="命名 UCS"><svg><use href="#axlist" /></svg></button>
          <button aria-label="世界 UCS"><svg><use href="#axworld" /></svg></button>
          <button aria-label="绕 X 旋转"><svg><use href="#axrot" /></svg></button>
          <button aria-label="旋转选项"><i class="caret"></i></button>
          <button aria-label="上一个 UCS"><svg><use href="#axprev" /></svg></button>
          <button aria-label="对象 UCS"><svg><use href="#axobj" /></svg></button>
          <button aria-label="Z 轴矢量"><svg><use href="#axz" /></svg></button>
          <button aria-label="三点"><svg><use href="#ax3" /></svg></button>
          <button aria-label="面 UCS"><svg><use href="#axface" /></svg></button>
          <button aria-label="面选项"><i class="caret"></i></button>
          <div class="combo">
            <svg><use href="#axworld" /></svg>
            <select aria-label="命名 UCS"><option>世界</option></select>
            <i class="caret big"></i>
          </div>
        </div>
        <h2><span>坐标</span><button aria-label="坐标设置"><svg><use href="#launch" /></svg></button></h2>
      </section>

      <section class="panel views">
        <div class="body list">
          <div class="combo">
            <svg><use href="#shade" /></svg>
            <select aria-label="视觉样式"><option>带边缘着色</option></select>
            <i class="caret big"></i>
          </div>
          <div class="combo">
            <svg><use href="#viewico" /></svg>
            <select aria-label="视图"><option>未保存的视图</option></select>
            <i class="caret big"></i>
          </div>
          <button><svg><use href="#vport" /></svg>单个视口<i class="caret"></i></button>
        </div>
        <h2><span>视图<i class="caret big"></i></span></h2>
      </section>

      <section class="panel selection">
        <div class="body">
          <button class="large on"><svg><use href="#cull" /></svg>剔除</button>
          <button class="large"><svg><use href="#nofilter" /></svg>无过滤器<i class="caret"></i></button>
          <button class="large"><svg><use href="#gizmo" /></svg>移动<br />小控件<i class="caret side"></i></button>
        </div>
        <h2><span>选择</span></h2>
      </section>

      <section class="panel layers">
        <div class="body">
          <button class="large"><svg><use href="#layerprop" /></svg>图层<br />特性</button>
          <div class="layer-tools">
            <div class="combo">
              <svg><use href="#bulb" /></svg>
              <svg><use href="#sun" /></svg>
              <svg><use href="#unlock" /></svg>
              <i class="swatch"></i>
              <select aria-label="图层"><option>线</option></select>
              <i class="caret big"></i>
            </div>
            <div class="cells">
              <button aria-label="关"><svg><use href="#layoff" /></svg></button>
              <button aria-label="隔离"><svg><use href="#layiso" /></svg></button>
              <button aria-label="冻结"><svg><use href="#layfrz" /></svg></button>
              <button aria-label="锁定"><svg><use href="#laylck" /></svg></button>
              <button><svg><use href="#laycur" /></svg>置为当前</button>
              <button aria-label="打开所有图层"><svg><use href="#layon" /></svg></button>
              <button aria-label="取消隔离"><svg><use href="#layuniso" /></svg></button>
              <button aria-label="解冻"><svg><use href="#laythw" /></svg></button>
              <button aria-label="解锁"><svg><use href="#layulk" /></svg></button>
              <button><svg><use href="#laymch" /></svg>匹配图层</button>
            </div>
          </div>
        </div>
        <h2><span>图层<i class="caret big"></i></span></h2>
      </section>

      <section class="panel groups">
        <div class="body">
          <button class="large"><svg><use href="#group" /></svg>组</button>
          <div class="list">
            <button aria-label="解除编组"><svg><use href="#grp1" /></svg></button>
            <button aria-label="组编辑"><svg><use href="#grp2" /></svg></button>
            <button class="on" aria-label="启用组选择"><svg><use href="#grp3" /></svg></button>
          </div>
        </div>
        <h2><span>组<i class="caret big"></i></span></h2>
      </section>
    </div>

    <div class="files">
      <a class="file other" href="#" aria-label="开始"></a>
      <div class="file active">
        <a href="#">第22-23-24课-放样A-模型-22S-23S-24S*</a>
        <button aria-label="关闭"><svg viewBox="0 0 12 12"><path d="M1 1l10 10M11 1 1 11" stroke="#a6abb8" stroke-width="2.500" /></svg></button>
      </div>
      <button class="new" aria-label="新图形"><svg viewBox="0 0 12 12"><path d="M6 1v10M1 6h10" stroke="#b9bdc8" stroke-width="2" /></svg></button>
    </div>

    <main>
      <svg class="model" viewBox="0 213 1728 831" preserveAspectRatio="xMinYMin slice">
        <defs>
          <linearGradient id="g-rim"><stop offset="0" stop-color="#a5a5a5" /><stop offset=".35" stop-color="#858585" /><stop offset=".6" stop-color="#8c8c8c" /><stop offset="1" stop-color="#9c9e9e" /></linearGradient>
          <linearGradient id="g-chamfer" x2="1" y2=".15"><stop offset="0" stop-color="#9b9b9b" /><stop offset=".16" stop-color="#cfcfcf" /><stop offset=".27" stop-color="#fff" /><stop offset=".5" stop-color="#fff" /><stop offset=".58" stop-color="#cfd0d0" /><stop offset=".78" stop-color="#b0b1b1" /><stop offset="1" stop-color="#737172" /></linearGradient>
          <linearGradient id="g-cone"><stop offset="0" stop-color="#a9abac" /><stop offset=".38" stop-color="#c9caca" /><stop offset=".5" stop-color="#b5b6b7" /><stop offset=".68" stop-color="#dcdddb" /><stop offset=".82" stop-color="#757374" /><stop offset="1" stop-color="#a0a2a3" /></linearGradient>
          <linearGradient id="g-neck"><stop offset="0" stop-color="#a5a5a5" /><stop offset=".4" stop-color="#7d7d7d" /><stop offset=".8" stop-color="#949696" /><stop offset="1" stop-color="#7a7a7a" /></linearGradient>
          <linearGradient id="g-upper"><stop offset="0" stop-color="#777576" /><stop offset=".35" stop-color="#4a4749" /><stop offset=".7" stop-color="#777576" /><stop offset="1" stop-color="#a0a1a1" /></linearGradient>
          <linearGradient id="g-top" gradientUnits="userSpaceOnUse" x1="1300" y1="960" x2="1480" y2="870"><stop offset="0" stop-color="#a8a9a9" /><stop offset=".5" stop-color="#8f8d8e" /><stop offset="1" stop-color="#4a4748" /></linearGradient>
          <linearGradient id="g-side" gradientUnits="userSpaceOnUse" x1="1291" y1="956" x2="1200" y2="1060"><stop offset="0" stop-color="#a9abab" /><stop offset=".5" stop-color="#b2b4b5" /><stop offset="1" stop-color="#e4e4e4" /></linearGradient>
          <linearGradient id="g-front" gradientUnits="userSpaceOnUse" x1="1370" y1="930" x2="1500" y2="1090"><stop offset="0" stop-color="#a9abab" /><stop offset=".3" stop-color="#a9aaaa" /><stop offset=".55" stop-color="#cbccc9" /><stop offset="1" stop-color="#a5a7a4" /></linearGradient>
        </defs>

        <!-- ground grid -->
        <g class="ground">
          <path d="M0 241 1278 1044M397 200 1728 1037M861 200 1728 752M1325 200 1728 458M0 532 790 1044M0 825 337 1044" />
          <path d="M0 532 606 200M0 797 1110 200M50 1044 1590 200M560 1044 1728 406M1045 1044 1728 675M1545 1044 1728 945" />
        </g>

        <!-- profile circles and axis -->
        <g class="wire">
          <ellipse cx="769" cy="383" rx="135.500" ry="80" />
          <ellipse cx="769" cy="397" rx="135.500" ry="80" />
          <ellipse cx="769" cy="424" rx="101.500" ry="60" />
          <ellipse cx="769" cy="506.500" rx="51" ry="30" />
          <ellipse cx="769" cy="561" rx="51" ry="30" />
          <ellipse cx="769" cy="643.500" rx="101.500" ry="60" />
          <ellipse cx="769" cy="671" rx="135.500" ry="80" />
          <ellipse cx="769" cy="698" rx="135.500" ry="80" />
          <path d="M768.500 288V342M768.500 397V452M768.500 507V562M768.500 617V672" />
          <path class="axis" d="M768.500 342V397M768.500 452V507M768.500 562V617M768.500 672V727" />
        </g>

        <!-- lofted solid -->
        <g class="solid">
          <path d="M372.500 812V840A136 80 0 0 0 644.500 840V812Z" fill="url(#g-rim)" />
          <ellipse cx="508.500" cy="812.500" rx="136" ry="80" fill="url(#g-chamfer)" />
          <path d="M457.500 698 411 768A101.500 60 0 1 0 606 768L559.500 698Z" fill="url(#g-cone)" />
          <path d="M457.500 649V703A51 30 0 0 0 559.500 703V649Z" fill="url(#g-neck)" />
          <path d="M422 598 457.500 649A51 30 0 0 0 559.500 649L595 598Z" fill="url(#g-upper)" />
          <path class="thin" d="M422 598A101.500 60 0 0 0 595 598M435 609 471.500 669V723L435 824M578 610 543.500 669V724L578 828 600.500 871V898M409.500 868V894" />
          <path d="M372.500 525V539A136 80 0 0 0 644.500 539V525Z" fill="url(#g-rim)" />
          <ellipse cx="508.500" cy="525" rx="136" ry="80" fill="#a8aaab" />
          <path class="thin" d="M409.500 579V594M600.500 582V597M508.500 430V485" />
          <path class="thin axis" d="M508.500 485V526" />
          <path class="outline" d="M372.500 539V525A136 80 0 0 1 644.500 525V539A136 80 0 0 1 372.500 539M425 603 458 653V700L421 751A136 80 0 0 0 372.500 812V840A136 80 0 0 0 644.500 840V812A136 80 0 0 0 596 751L559 700V653L592 603" />
        </g>

        <g class="solid">
          <path d="M1054 1043 1109 1011 1367 870C1380 863 1391 857 1404 865L1549 957C1500 930 1290 930 1109 1011Z" fill="url(#g-top)" />
          <path d="M1054 1044 1109 1011C1170 984 1230 967 1291 956C1390 938 1430 937 1460 939C1500 941 1530 948 1549 957C1585 977 1604 1005 1606 1044Z" fill="url(#g-front)" />
          <path d="M1054 1044 1109 1011C1170 984 1230 967 1291 956Q1262 1000 1235 1044Z" fill="url(#g-side)" stroke="none" />
          <path class="thin" d="M1109 1011C1170 984 1230 967 1291 956M1367 870Q1320 910 1291 956T1235 1044" />
          <path class="outline" d="M1054 1044 1109 1011 1367 870C1380 863 1391 857 1404 865L1549 957C1585 977 1604 1005 1606 1044" />
        </g>

        <!-- ucs tripod -->
        <path d="M861 217 836 231" stroke="#b9626f" />
        <path d="M861 217 886 232" stroke="#62b584" />
        <path d="M861.500 217V247" stroke="#7f7fd6" />
        <path d="M859.500 214.500h4v5h-4zM855 213l4 2M868 213l-4 2" fill="none" stroke="#fff" />
        <path d="M-4 947 9 962M9 947-4 962" stroke="#b3212b" />
      </svg>

      <div class="viewlabel">图][带边缘着色]</div>

      <div class="viewcube">
        <svg viewBox="0 0 88 130">
          <ellipse cx="76" cy="80" rx="67" ry="43" fill="none" stroke="#444b56" stroke-width="14" />
          <path d="M36 25 77 6 118 25 75 50Z" fill="#bcbdc1" />
          <path d="M36 25 75 50V96L38 69Z" fill="#a9abaf" />
          <path d="M75 50 118 25V69L75 96Z" fill="#999ba0" />
          <path d="M36 25 75 50V96M75 50 118 25" fill="none" stroke="#30343b" stroke-dasharray="8 2" />
          <text x="66" y="35" font-size="21" fill="#4a4d52" transform="rotate(-24 76 28)">上</text>
          <text x="44" y="70" font-size="20" fill="#4a4d52" transform="rotate(22 54 62)">左</text>
          <text x="78" y="78" font-size="20" fill="#4a4d52">前</text>
          <text x="26" y="52" font-size="13" fill="#b5b8bd" transform="rotate(32 32 46)">北</text>
          <text x="9" y="116" font-size="22" fill="#c4c6ca" transform="rotate(-30 21 108)">西</text>
        </svg>
        <button>WCS</button>
      </div>

      <div class="command">
        <span class="grip"></span>
        <button aria-label="关闭命令行"><svg viewBox="0 0 20 20"><path d="M5 5l10 10M15 5 5 15" stroke="#c7cad2" stroke-width="2.500" /></svg></button>
        <button aria-label="自定义"><svg><use href="#wrench" /></svg></button>
        <div class="prompt">
          <svg viewBox="0 0 20 16"><path d="M.5.500h19v15H.5z" fill="#b3b4b8" stroke="#6b6d73" /><path d="M1 1h18v3H1z" fill="#6b6d73" /><path d="M3 6l3 2-3 2M7 11h5" fill="none" stroke="#6b6d73" /></svg>
          <i class="caret big"></i>
          <input type="text" placeholder="键入命令" aria-label="命令" />
          <i class="caret up"></i>
        </div>
      </div>
    </main>

    <footer>
      <nav class="layouts">
        <a class="first" href="#">布局1</a>
        <a href="#">布局2</a>
        <button aria-label="新建布局"><svg viewBox="0 0 12 12"><path d="M6 1v10M1 6h10" stroke="#b9bdc8" stroke-width="2" /></svg></button>
      </nav>
      <div class="status">
        <button class="space">模型</button>
        <button class="on" aria-label="栅格"><svg><use href="#s-grid" /></svg></button>
        <button class="drop" aria-label="捕捉"><svg><use href="#s-snap" /></svg><i class="caret big"></i></button>
        <button class="on part" aria-label="动态输入"><svg><use href="#s-dyn" /></svg></button>
        <button aria-label="正交"><svg><use href="#s-ortho" /></svg></button>
        <button class="drop lit" aria-label="极轴追踪"><svg><use href="#s-polar" /></svg><i class="caret big"></i></button>
        <button class="drop" aria-label="等轴测草图"><svg><use href="#s-iso" /></svg><i class="caret big"></i></button>
        <button class="on" aria-label="对象捕捉追踪"><svg><use href="#s-track" /></svg></button>
        <button class="drop lit" aria-label="对象捕捉"><svg><use href="#s-osnap" /></svg><i class="caret big"></i></button>
        <button aria-label="线宽"><svg><use href="#s-lw" /></svg></button>
        <button aria-label="选择循环"><svg><use href="#s-trans" /></svg></button>
        <button class="drop" aria-label="三维对象捕捉"><svg><use href="#s-3d" /></svg><i class="caret big"></i></button>
        <button class="part" aria-label="动态 UCS"><svg><use href="#s-ucs" /></svg></button>
        <button class="on" aria-label="注释可见性"><svg><use href="#s-anno1" /></svg></button>
        <button aria-label="自动缩放"><svg><use href="#s-anno2" /></svg></button>
        <button aria-label="注释比例"><svg><use href="#s-anno" /></svg></button>
        <button class="ratio">1:1<i class="caret big"></i></button>
        <button class="drop" aria-label="切换工作空间"><svg><use href="#gear" /></svg><i class="caret big"></i></button>
        <button aria-label="注释监视器"><svg><use href="#s-plus" /></svg></button>
        <button aria-label="隔离对象"><svg><use href="#s-iso2" /></svg></button>
        <button class="last" aria-label="图形性能"><svg><use href="#s-perf" /></svg></button>
      </div>
    </footer>
  </body>
</html>
```

FILE: styles.css
```css
* {
  box-sizing: border-box;
}

html,
body {
  margin: 0;
  height: 100%;
}

body {
  display: flex;
  flex-direction: column;
  min-height: 100vh;
  overflow: hidden;
  background: #222834;
  color: #e4e6ec;
  font-family: 'Open Sans', 'Noto Sans CJK SC', sans-serif;
  font-size: 15px;
  line-height: 21px;
  white-space: nowrap;
}

button,
select,
input {
  margin: 0;
  padding: 0;
  border: 0;
  background: none;
  color: inherit;
  font: inherit;
}

button {
  display: flex;
  align-items: center;
}

a {
  color: inherit;
  text-decoration: none;
}

h1,
h2 {
  margin: 0;
  font-size: 15px;
  font-weight: normal;
}

svg {
  display: block;
  flex: none;
  width: 20px;
  height: 20px;
}

.sprite {
  position: absolute;
  width: 0;
  height: 0;
}

.caret {
  flex: none;
  border: 3px solid transparent;
  border-top: 4px solid #d3d6de;
  border-bottom: 0;
}

.caret.big {
  border-width: 5px 5px 0;
}

.caret.dim {
  border-top-color: #9196a2;
}

.caret.up {
  border-top: 0;
  border-bottom: 4px solid #3d4354;
}

.caret.right {
  border: 5px solid transparent;
  border-left-color: #d3d6de;
  border-right: 0;
}

/* title bar */

.titlebar {
  display: flex;
  align-items: center;
  height: 26px;
  padding-right: 72px;
}

.quick {
  display: flex;
  gap: 10px;
  margin-left: -6px;
  width: 267px;
  overflow: hidden;
}

.quick .slim {
  margin: 0 -1px;
}

.combo {
  display: flex;
  align-items: center;
  height: 28px;
  border: 1px solid #2b3142;
  background: #4b546b;
}

.combo select {
  flex: 1;
  min-width: 0;
  appearance: none;
  outline: none;
}

.workspace {
  width: 223px;
  height: 26px;
  padding: 0 2px 0 4px;
  gap: 2px;
  border: 0;
  background: #3d4354;
}

.customize {
  margin-left: 5px;
  padding-top: 3px;
  border-top: 2px solid #d3d6de;
}

.titlebar h1 {
  flex: 1;
  text-align: center;
  font-size: 16px;
  color: #f0f1f4;
}

.search {
  width: 223px;
  height: 26px;
  margin-left: 8px;
  padding: 0 4px 4px;
  background: #454c60;
  font-size: 14px;
  outline: none;
}

.search::placeholder {
  color: #a7adba;
  font-style: italic;
  opacity: 1;
}

.account {
  display: flex;
  align-items: center;
  gap: 10px;
  padding-left: 5px;
}

.name,
.account .app,
.help {
  gap: 8px;
}

.name .caret {
  margin: 0 4px;
}

.help {
  margin-left: 4px;
  padding-left: 12px;
  border-left: 1px solid #4b5263;
}

.help b {
  width: 18px;
  height: 18px;
  margin-right: 4px;
  border-radius: 50%;
  background: #e4e7f2;
  color: #35426b;
  line-height: 18px;
  text-align: center;
}

/* ribbon tabs */

.tabs {
  display: flex;
  align-items: center;
  gap: 24px;
  height: 28px;
  padding-top: 4px;
  color: #a9aebb;
}

.tabs .current {
  width: 16px;
  height: 24px;
  margin-right: -11px;
  background: #3d4354;
}

.collapse {
  gap: 7px;
  margin-left: 18px;
}

.collapse span {
  display: flex;
  align-items: center;
  justify-content: center;
  width: 17px;
  height: 10px;
  border-radius: 3px;
  background: #dcdfe6;
}

/* ribbon */

.ribbon {
  display: flex;
  height: 122px;
  overflow: hidden;
  background: #3d4354;
}

.panel {
  display: flex;
  flex-direction: column;
  min-width: 0;
  padding-top: 4px;
  border-right: 1px solid #262c3a;
}

.body {
  display: flex;
  height: 93px;
}

.panel h2 {
  display: flex;
  height: 25px;
  padding-top: 3px;
}

.panel h2 span {
  display: flex;
  flex: 1;
  align-items: center;
  justify-content: center;
  gap: 8px;
}

.panel h2 svg {
  width: 16px;
  height: 16px;
}

.list {
  display: grid;
  grid-template-rows: repeat(3, 31px);
}

.list button,
.cells button {
  gap: 6px;
}

.list button .caret,
.cells button svg ~ .caret {
  margin-left: 5px;
}

.cells {
  display: grid;
  grid-auto-rows: 31px;
  justify-items: start;
}

.large {
  position: relative;
  display: block;
  height: 90px;
  padding-top: 2px;
  text-align: center;
  line-height: 21px;
}

.large svg {
  width: 40px;
  height: 40px;
  margin: 0 auto 4px;
}

.large .caret {
  display: block;
  width: 6px;
  margin: 0 auto;
}

.modeling {
  flex: 154 1 154px;
}

.modeling .large {
  width: 52px;
  margin-left: -18px;
}

.modeling .list {
  padding-left: 8px;
}

.modeling h2 span {
  justify-content: flex-start;
  padding-left: 5px;
}

.mesh {
  flex: 85 1 85px;
}

.mesh .body {
  gap: 8px;
  padding-left: 3px;
}

.mesh .large {
  width: 44px;
}

.solidedit {
  flex: 170 1 170px;
}

.solidedit .cells {
  grid-template-columns: 35px 32px auto;
  padding-left: 7px;
  justify-content: start;
}

.draw {
  flex: 117 1 117px;
}

.draw .cells {
  grid-template-columns: 30px 31px 43px;
  align-items: center;
  padding-left: 7px;
}

.split {
  position: relative;
  display: flex;
  height: 26px;
}

.split button {
  justify-content: center;
  width: 14px;
  border: 1px solid transparent;
}

.split button:first-child {
  width: 29px;
}

.hover button {
  border-color: #262c38;
}

.hover button:first-child {
  background: #252c37;
}

.pointer {
  position: absolute;
  z-index: 1;
  top: 18px;
  left: 14px;
  width: 14px;
  height: 21px;
}

.modify {
  flex: 181 1 181px;
}

.modify .cells {
  grid-template-columns: 35px 31px 35px 31px 29px auto;
  justify-content: start;
  padding-left: 5px;
}

.section {
  flex: 79 1 79px;
}

.section .body {
  justify-content: center;
}

.coords {
  flex: 181 1 181px;
}

.coords .cells {
  grid-template-columns: 26px 23px 34px 31px 30px auto;
  padding: 0 3px 0 7px;
}

.coords .combo {
  grid-column: 3 / 7;
  justify-self: stretch;
  gap: 2px;
  margin-left: -4px;
  padding: 0 2px 0 4px;
}

.views {
  flex: 165 1 165px;
}

.views .body {
  padding: 0 3px 0 2px;
}

.views .combo {
  gap: 5px;
  margin-top: 1px;
  padding: 0 5px 0 2px;
}

.views button {
  padding-left: 5px;
}

.selection {
  flex: 214 1 214px;
}

.selection .body {
  gap: 14px;
  padding-left: 3px;
}

.selection .on {
  width: 48px;
  padding-top: 1px;
  border: 1px solid #8cb9e0;
  background: #41597a;
}

.selection .large {
  min-width: 48px;
}

.large .side {
  position: absolute;
  right: -9px;
  bottom: 17px;
}

.selection .large:last-child {
  margin-left: 12px;
}

.layers {
  flex: 315 1 315px;
}

.layers .body {
  padding: 0 3px 0 7px;
}

.layer-tools {
  flex: 1;
  padding-left: 6px;
}

.layer-tools .combo {
  gap: 4px;
  margin: 1px 0 2px;
  padding: 0 1px 0 3px;
}

.layer-tools .cells {
  grid-template-columns: repeat(4, 30px) auto;
  justify-content: start;
  padding-left: 4px;
}

.swatch {
  width: 18px;
  height: 18px;
  margin: 0 2px;
  border: 1px solid #111;
  background: #fff;
}

.groups {
  flex: 68 1 68px;
  overflow: hidden;
  border-right: 0;
}

.groups .body {
  gap: 8px;
  padding-left: 7px;
}

.groups h2 {
  padding-left: 14px;
}

.groups .on {
  margin: 2px 0 2px -4px;
  padding-left: 3px;
  border: 1px solid #8cb9e0;
  background: #41597a;
}

/* drawing tabs */

.files {
  display: flex;
  align-items: flex-end;
  height: 37px;
  border-bottom: 4px solid #3d4656;
}

.file {
  display: flex;
  align-items: center;
  height: 27px;
  border-radius: 12px 12px 0 0;
  background: #3d4354;
  font-size: 16px;
}

.file.other {
  width: 84px;
  margin-left: -1px;
  border-radius: 0 12px 12px 0;
  background: #303646;
}

.file.active {
  gap: 10px;
  padding: 0 18px 0 14px;
}

.file svg,
.new svg {
  width: 12px;
  height: 12px;
}

.new {
  justify-content: center;
  width: 24px;
  height: 18px;
  margin: 0 0 4px 8px;
  border-radius: 4px 8px 4px 8px;
  background: #343a4a;
}

/* drawing area */

main {
  position: relative;
  flex: 1;
  min-height: 0;
  overflow: hidden;
  background: #222830;
}

.model {
  position: absolute;
  inset: 0;
  width: 100%;
  height: 100%;
}

.ground {
  fill: none;
  stroke: #2c3742;
}

.wire,
.solid {
  stroke: #fff;
  stroke-width: 1;
  shape-rendering: crispEdges;
}

.wire {
  fill: none;
}

.thin,
.outline {
  fill: none;
}

.outline {
  stroke-width: 2;
}

.axis {
  stroke: #2b76bd;
}

.viewlabel {
  position: absolute;
  top: 6px;
  left: -2px;
}

.viewcube {
  position: absolute;
  top: 77px;
  right: 0;
  width: 88px;
}

.viewcube svg {
  width: 88px;
  height: 130px;
  overflow: hidden;
}

.viewcube button {
  width: 41px;
  height: 20px;
  margin: 21px 0 0 47px;
  padding-left: 5px;
  border-radius: 5px 0 0 5px;
  background: #8f939c;
  color: #454a54;
  font-size: 14px;
}

.command {
  position: absolute;
  right: 288px;
  bottom: 1px;
  left: 288px;
  display: flex;
  align-items: center;
  gap: 10px;
  height: 34px;
  padding-left: 5px;
  background: linear-gradient(90deg, #2a2f3e 70px, transparent 70px);
}

.grip {
  width: 6px;
  height: 21px;
  margin-right: -7px;
  background: radial-gradient(circle, #b7bbc5 1px, transparent 1px) 0 0 / 3px 4px;
}

.prompt {
  display: flex;
  flex: 1;
  align-items: center;
  align-self: stretch;
  gap: 3px;
  margin-left: -4px;
  padding: 0 6px 0 5px;
  border: 1px solid #6c6f76;
  border-left: 0;
  border-radius: 2px;
  background: rgba(255, 255, 255, 0.7);
}

.prompt svg {
  height: 16px;
}

.prompt .caret {
  border-top-color: #55585f;
}

.prompt .caret.up {
  border: 5px solid transparent;
  border-top: 0;
  border-bottom-color: #76787d;
}

.prompt input {
  flex: 1;
  margin-left: 5px;
  outline: none;
  color: #333;
  font-size: 16px;
}

.prompt input::placeholder {
  color: #6e7075;
  font-style: italic;
  opacity: 1;
}

/* status bar */

footer {
  display: flex;
  justify-content: space-between;
  height: 36px;
  padding-top: 2px;
  border-top: 1px solid #535965;
}

.layouts {
  display: flex;
  gap: 8px;
  color: #c0c4ce;
}

.layouts a,
.layouts button {
  height: 21px;
  padding: 0 12px;
  border-radius: 4px 4px 10px 10px;
  background: #31374a;
  line-height: 18px;
}

.layouts .first {
  margin-left: -21px;
}

.layouts button {
  height: 19px;
  padding: 0 8px;
}

.layouts svg {
  width: 12px;
  height: 12px;
}

.status {
  display: flex;
  gap: 2px;
  height: 29px;
}

.status button {
  justify-content: center;
  width: 29px;
  background: #3a4152;
}

.status .space {
  width: 34px;
  font-weight: 500;
}

.status .drop {
  justify-content: flex-start;
  gap: 8px;
  width: 47px;
  padding-left: 4px;
}

.status .on {
  background: #5f8cbf;
}

.status .lit {
  background: linear-gradient(90deg, #5f8cbf 29px, #3a4152 29px);
}

.status .part {
  margin-left: 2px;
}

.status .ratio {
  gap: 5px;
  width: 42px;
  padding-right: 4px;
  font-size: 14px;
}

.status .last {
  width: 41px;
}

.status .last svg {
  width: 24px;
  height: 24px;
}
```
